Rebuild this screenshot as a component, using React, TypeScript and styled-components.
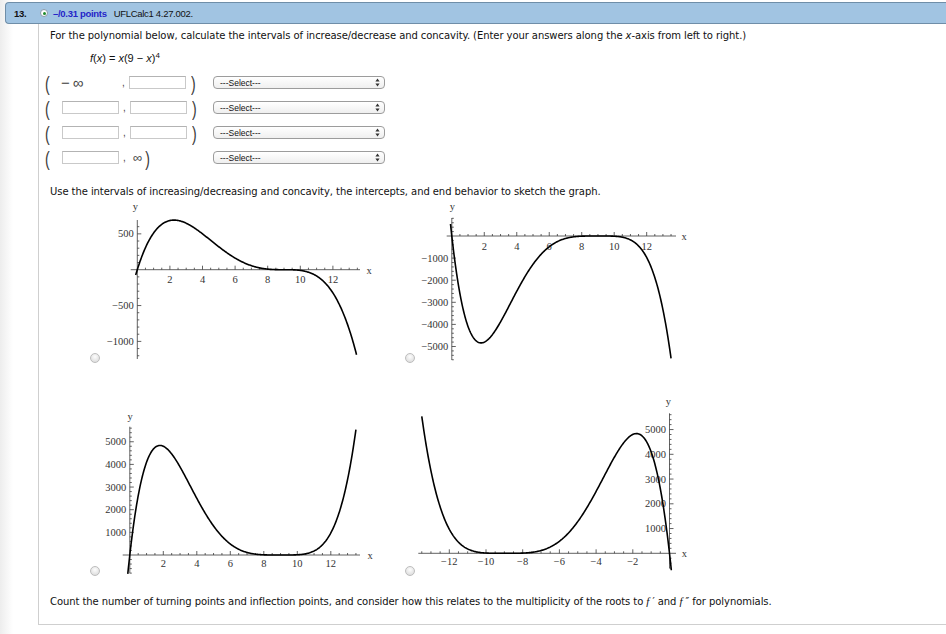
import styled, { createGlobalStyle } from "styled-components";

const GlobalStyle = createGlobalStyle`
  html, body { margin: 0; padding: 0; background: #fff; }
  body { font-family: "DejaVu Sans", Verdana, sans-serif; color: #111; }
`;

const Page = styled.div`
  width: 946px;
  height: 634px;
  overflow: hidden;
  box-sizing: border-box;
  padding-top: 2px;
  background: linear-gradient(90deg, #ededed 0px, #fff 13px);
`;

const Header = styled.div`
  margin-left: 5px;
  height: 20px;
  border: 1px solid #6f8ea8;
  border-right: none;
  border-radius: 4px 0 0 4px;
  background: #a1c4e2;
  display: flex;
  align-items: center;
  padding-left: 8px;
  font-family: "Liberation Sans", Arial, sans-serif;
  font-size: 9.5px;
  letter-spacing: -0.3px;
  color: #111;
`;

const Num = styled.b`
  width: 26px;
`;

const StatusDot = styled.span`
  width: 8px;
  height: 8px;
  box-sizing: border-box;
  border-radius: 50%;
  border: 1px solid #8a9aa8;
  background: #fff;
  display: flex;
  align-items: center;
  justify-content: center;
  margin-right: 5px;
  &::after {
    content: "";
    width: 3px;
    height: 3px;
    border-radius: 50%;
    background: #1f8a2a;
  }
`;

const Points = styled.b`
  color: #2525c8;
  margin-right: 7px;
`;

const Body = styled.div`
  margin-left: 38px;
  height: 601px;
  box-sizing: border-box;
  border-left: 1px solid #cfcfcf;
  border-bottom: 1px solid #cfcfcf;
  padding: 5px 0 0 11px;
`;

const Para = styled.p<{ $mt?: number }>`
  margin: ${(p) => p.$mt ?? 0}px 0 0 0;
  font-size: 10px;
  line-height: 13px;
  letter-spacing: -0.07px;
  white-space: nowrap;
`;

const Formula = styled.div`
  margin: 9px 0 0 40px;
  height: 14px;
  line-height: 14px;
  font-family: "Liberation Sans", Arial, sans-serif;
  font-size: 11px;
  sup {
    font-size: 8px;
    vertical-align: 4px;
    line-height: 0;
  }
`;

const Rows = styled.div`
  margin: 5px 0 0 -5px;
  display: grid;
  grid-template-columns: 168px 172px;
  grid-auto-rows: 25px;
  align-items: center;
`;

const Interval = styled.div`
  display: flex;
  align-items: center;
  height: 25px;
`;

const Paren = styled.span<{ $w?: number; $ml?: number }>`
  display: inline-block;
  width: ${(p) => p.$w ?? 7}px;
  margin-left: ${(p) => p.$ml ?? 0}px;
  font-family: "Liberation Sans", Arial, sans-serif;
  font-size: 14px;
  line-height: 14px;
  color: #3a3a3a;
  transform: scaleY(1.5);
`;

const Slot = styled.span`
  width: 57px;
  height: 13px;
  box-sizing: border-box;
  border: 1px solid #c9c9c9;
  border-top-color: #b3b3b3;
  background: #fff;
`;

const InfText = styled.span<{ $size: number; $w?: number; $ml?: number }>`
  display: inline-block;
  width: ${(p) => (p.$w ? p.$w + "px" : "auto")};
  margin-left: ${(p) => p.$ml ?? 0}px;
  font-family: "Liberation Sans", Arial, sans-serif;
  font-size: ${(p) => p.$size}px;
  line-height: 14px;
  color: #444;
`;

const Comma = styled.span`
  width: 7px;
  padding-left: 4px;
  font-family: "Liberation Sans", Arial, sans-serif;
  font-size: 10px;
  color: #444;
`;

const SelectBox = styled.div`
  width: 172px;
  height: 13px;
  box-sizing: border-box;
  border: 1px solid #9c9c9c;
  border-radius: 4px;
  background: linear-gradient(#ffffff, #efefef);
  display: flex;
  align-items: center;
  justify-content: space-between;
  padding: 0 4px 0 6px;
  font-family: "Liberation Sans", Arial, sans-serif;
  font-size: 8.5px;
  color: #111;
`;

const Graphs = styled.div`
  margin: 0 0 0 40px;
  display: grid;
  grid-template-columns: 315px 315px;
  grid-template-rows: 172px 184px;
  row-gap: 26px;
`;

const Cell = styled.div`
  display: flex;
  align-items: flex-end;
`;

const Radio = styled.span<{ $mb: number }>`
  flex: none;
  width: 10px;
  height: 10px;
  box-sizing: border-box;
  border-radius: 50%;
  border: 1px solid #bdbdbd;
  background: radial-gradient(circle at 50% 35%, #fdfdfd, #d6d6d6);
  margin-bottom: ${(p) => p.$mb}px;
`;

const PlotSvg = styled.svg`
  display: block;
  flex: none;
  overflow: visible;
  text {
    font-family: "Liberation Serif", "Times New Roman", serif;
    font-size: 10.5px;
    fill: #333;
  }
`;

const SerifI = styled.i`
  font-family: "Liberation Serif", "Times New Roman", serif;
  font-size: 11px;
`;

type PlotSpec = {
  h: number;
  ox: number;
  oy: number;
  sx: number;
  sy: number;
  axX: [number, number];
  axY: [number, number];
  dom: [number, number];
  f: (x: number) => number;
  xLabels: number[];
  xMinor: number;
  yLabels: number[];
  yMinor: number;
  xLabelDy: number;
  yPos: [number, number];
  xPos: [number, number];
};

const fmt = (v: number) => (v < 0 ? "\u2212" + Math.abs(v) : String(v));

function Plot({ spec }: { spec: PlotSpec }) {
  const s = spec;
  const pts: string[] = [];
  const n = 360;
  for (let i = 0; i <= n; i++) {
    const x = s.dom[0] + ((s.dom[1] - s.dom[0]) * i) / n;
    const px = s.ox + x * s.sx;
    const py = s.oy - s.f(x) * s.sy;
    pts.push(`${i ? "L" : "M"}${px.toFixed(2)} ${py.toFixed(2)}`);
  }

  const ticks: JSX.Element[] = [];
  const x0 = (s.axX[0] - s.ox) / s.sx;
  const x1 = (s.axX[1] - s.ox) / s.sx;
  for (let k = Math.ceil(x0 / s.xMinor); k * s.xMinor <= x1; k++) {
    const v = k * s.xMinor;
    if (Math.abs(v) < 1e-9) continue;
    const major = s.xLabels.some((l) => Math.abs(l - v) < 1e-9);
    const px = s.ox + v * s.sx;
    ticks.push(
      <line key={"x" + k} x1={px} x2={px} y1={s.oy} y2={s.oy - (major ? 4 : 2)} />
    );
  }
  const y0 = (s.oy - s.axY[1]) / s.sy;
  const y1 = (s.oy - s.axY[0]) / s.sy;
  for (let k = Math.ceil(y0 / s.yMinor); k * s.yMinor <= y1; k++) {
    const v = k * s.yMinor;
    if (v === 0) continue;
    const major = s.yLabels.includes(v);
    const py = s.oy - v * s.sy;
    ticks.push(
      <line key={"y" + k} x1={s.ox} x2={s.ox + (major ? 4 : 2)} y1={py} y2={py} />
    );
  }

  return (
    <PlotSvg width={290} height={s.h} viewBox={`0 0 290 ${s.h}`}>
      <g stroke="#3a3a3a" strokeWidth={0.8}>
        <line x1={s.axX[0]} x2={s.axX[1]} y1={s.oy} y2={s.oy} />
        <line x1={s.ox} x2={s.ox} y1={s.axY[0]} y2={s.axY[1]} />
        {ticks}
      </g>
      {s.xLabels.map((v) => (
        <text key={"xl" + v} x={s.ox + v * s.sx} y={s.oy + s.xLabelDy} textAnchor="middle">
          {fmt(v)}
        </text>
      ))}
      {s.yLabels.map((v) => (
        <text key={"yl" + v} x={s.ox - 3.5} y={s.oy - v * s.sy + 3.5} textAnchor="end">
          {fmt(v)}
        </text>
      ))}
      <text x={s.yPos[0]} y={s.yPos[1] + 3.5} textAnchor="middle">y</text>
      <text x={s.xPos[0]} y={s.xPos[1] + 3.5} textAnchor="middle">x</text>
      <path d={pts.join("")} fill="none" stroke="#000" strokeWidth={1.6} />
    </PlotSvg>
  );
}

const plots: { spec: PlotSpec; mb: number }[] = [
  {
    mb: 7,
    spec: {
      h: 172,
      ox: 37.3,
      oy: 71.7,
      sx: 16.3,
      sy: 0.0717,
      axX: [30.7, 260],
      axY: [22, 161],
      dom: [-0.1, 13.45],
      f: (x) => x * Math.pow(9 - x, 3),
      xLabels: [2, 4, 6, 8, 10, 12],
      xMinor: 0.5,
      yLabels: [500, -500, -1000],
      yMinor: 100,
      xLabelDy: 13.5,
      yPos: [35.3, 8],
      xPos: [269, 72.7],
    },
  },
  {
    mb: 7,
    spec: {
      h: 172,
      ox: 36.8,
      oy: 38,
      sx: 16.24,
      sy: 0.0221,
      axX: [31.7, 261],
      axY: [20, 162],
      dom: [-0.08, 13.5],
      f: (x) => -x * Math.pow(9 - x, 4),
      xLabels: [2, 4, 6, 8, 10, 12],
      xMinor: 0.5,
      yLabels: [-1000, -2000, -3000, -4000, -5000],
      yMinor: 200,
      xLabelDy: 13.5,
      yPos: [37.3, 8.7],
      xPos: [269, 38],
    },
  },
  {
    mb: 4,
    spec: {
      h: 184,
      ox: 29.8,
      oy: 159,
      sx: 16.75,
      sy: 0.02265,
      axX: [22.7, 260],
      axY: [30.7, 177.3],
      dom: [-0.12, 13.5],
      f: (x) => x * Math.pow(9 - x, 4),
      xLabels: [2, 4, 6, 8, 10, 12],
      xMinor: 0.5,
      yLabels: [1000, 2000, 3000, 4000, 5000],
      yMinor: 200,
      xLabelDy: 12,
      yPos: [30, 20.7],
      xPos: [270, 159],
    },
  },
  {
    mb: 4,
    spec: {
      h: 184,
      ox: 254.5,
      oy: 157.3,
      sx: 18.35,
      sy: 0.02475,
      axX: [3.3, 261],
      axY: [17.3, 172.3],
      dom: [-13.5, 0.1],
      f: (x) => -x * Math.pow(9 + x, 4),
      xLabels: [-12, -10, -8, -6, -4, -2],
      xMinor: 0.5,
      yLabels: [1000, 2000, 3000, 4000, 5000],
      yMinor: 200,
      xLabelDy: 12,
      yPos: [253.3, 5.7],
      xPos: [269.3, 157.3],
    },
  },
];

function Arrows() {
  return (
    <svg width="5" height="9" viewBox="0 0 5 9">
      <path d="M2.5 0.5 L4.6 3.6 L0.4 3.6 Z M2.5 8.5 L4.6 5.4 L0.4 5.4 Z" fill="#333" />
    </svg>
  );
}

function Select() {
  return (
    <SelectBox>
      <span>---Select---</span>
      <Arrows />
    </SelectBox>
  );
}

export default function App() {
  return (
    <Page>
      <GlobalStyle />
      <Header>
        <Num>13.</Num>
        <StatusDot />
        <Points>–/0.31 points</Points>
        <span>UFLCalc1 4.27.002.</span>
      </Header>
      <Body>
        <Para>
          For the polynomial below, calculate the intervals of increase/decrease and concavity.
          (Enter your answers along the <i>x</i>-axis from left to right.)
        </Para>
        <Formula>
          <i>f</i>(<i>x</i>) = <i>x</i>(9 − <i>x</i>)<sup>4</sup>
        </Formula>
        <Rows>
          <Interval>
            <Paren $w={16}>(</Paren>
            <InfText $size={15} $w={57}>−{"\u2009"}∞</InfText>
            <Comma>,</Comma>
            <Slot />
            <Paren $ml={5}>)</Paren>
          </Interval>
          <Select />
          <Interval>
            <Paren $w={17}>(</Paren>
            <Slot />
            <Comma>,</Comma>
            <Slot />
            <Paren $ml={5}>)</Paren>
          </Interval>
          <Select />
          <Interval>
            <Paren $w={17}>(</Paren>
            <Slot />
            <Comma>,</Comma>
            <Slot />
            <Paren $ml={5}>)</Paren>
          </Interval>
          <Select />
          <Interval>
            <Paren $w={17}>(</Paren>
            <Slot />
            <Comma>,</Comma>
            <InfText $size={13} $ml={3}>∞</InfText>
            <Paren $ml={3}>)</Paren>
          </Interval>
          <Select />
        </Rows>
        <Para $mt={15}>
          Use the intervals of increasing/decreasing and concavity, the intercepts, and end behavior
          to sketch the graph.
        </Para>
        <Graphs>
          {plots.map((p, i) => (
            <Cell key={i}>
              <Radio $mb={p.mb} />
              <Plot spec={p.spec} />
            </Cell>
          ))}
        </Graphs>
        <Para $mt={15}>
          Count the number of turning points and inflection points, and consider how this relates
          to the multiplicity of the roots to <SerifI>f</SerifI> ′ and <SerifI>f</SerifI> ″ for
          polynomials.
        </Para>
      </Body>
    </Page>
  );
}
